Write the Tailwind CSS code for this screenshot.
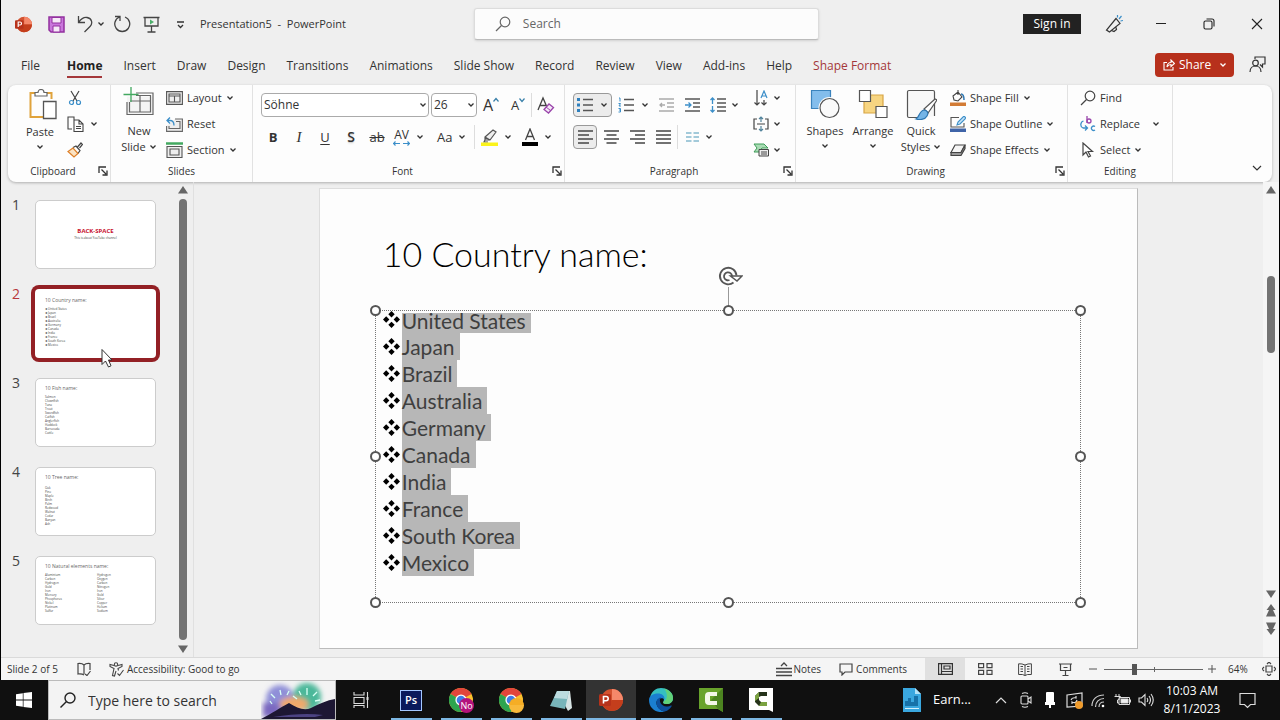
<!DOCTYPE html>
<html lang="en">
<head>
<meta charset="utf-8">
<meta name="viewport" content="width=device-width, initial-scale=1">
<title>Presentation5 - PowerPoint</title>
<script src="https://cdn.jsdelivr.net/npm/@tailwindcss/browser@4"></script>
</head>
<body class="h-screen overflow-hidden bg-[#efefef] font-['Open_Sans',sans-serif] text-[#333]">
<svg class="hidden" aria-hidden="true">
  <symbol id="chev" viewBox="0 0 8 8"><path d="M1.500 2.500 4 5l2.500-2.500" fill="none" stroke="#333" stroke-width="1.300"/></symbol>
  <symbol id="launch" viewBox="0 0 10 10"><path d="M1 7V1h7M3.500 3.500 8 8M9 4.500V9H4.500" fill="none" stroke="#333" stroke-width="1.300"/></symbol>
  <symbol id="ppt" viewBox="0 0 24 24"><circle cx="13" cy="12" r="11" fill="#d35230"/><path d="M13 1a11 11 0 0 1 11 11H13z" fill="#f5886a"/><path d="M13 12h11a11 11 0 0 1-20 6z" fill="#c43e1c"/><rect x="0" y="6" width="12" height="12" rx="1.500" fill="#b7321a"/><path d="M4.500 15.500V8.500h2.600a2 2 0 0 1 0 4.200H4.500" fill="none" stroke="#fff" stroke-width="1.600"/></symbol>
  <symbol id="chrome" viewBox="0 0 24 24"><circle cx="12" cy="12" r="12" fill="#fbc12d"/><path d="M12 12 1.600 6A12 12 0 0 1 22.400 6z" fill="#e2453b"/><path d="M12 12 1.600 6A12 12 0 0 0 12 24l5-9z" fill="#2da44f"/><circle cx="12" cy="12" r="5.600" fill="#fff"/><circle cx="12" cy="12" r="4.300" fill="#3f7de8"/></symbol>
</svg>

<div class="flex h-full flex-col">
<div class="flex min-h-0 flex-1 flex-col border-x border-black">

  <!-- Title bar -->
  <header class="grid h-12 shrink-0 grid-cols-[37%_27%_1fr] items-center">
    <div class="flex items-center pl-[14px]">
      <svg class="size-[17px]"><use href="#ppt"/></svg>
      <button class="ml-4" aria-label="Save"><svg class="size-[17px]" viewBox="0 0 17 17"><path d="M1 1h15v15H3l-2-2z" fill="#c977dc" stroke="#93319f" stroke-width="1.500"/><path d="M4 1.500h9V7H4zM5 10h7v6H5z" fill="#f6e9f8" stroke="#93319f"/></svg></button>
      <button class="ml-3 flex items-center gap-1" aria-label="Undo"><svg class="h-[18px] w-4" viewBox="0 0 16 18" fill="none" stroke="#444" stroke-width="1.300"><path d="M1.500 1v6.500H8M1.800 7.200C4 4 7 2 10 2.500c5 .8 6 6 3 9L7.500 17"/></svg><svg class="size-2"><use href="#chev"/></svg></button>
      <button class="ml-2" aria-label="Repeat"><svg class="size-[18px]" viewBox="0 0 18 18" fill="none" stroke="#444" stroke-width="1.300"><path d="M2 1.500h5V6M6.500 2A7.500 7.500 0 1 0 12 2"/></svg></button>
      <button class="ml-3" aria-label="Start slide show"><svg class="size-[17px]" viewBox="0 0 17 17" fill="none" stroke="#444" stroke-width="1.300"><path d="M.500 1.500h16M2 2v8h13V2M8.500 10v6M4.500 16h8"/><path d="m7 3.500 4 2.500-4 2.500z" fill="#4caf6a" stroke="none"/></svg></button>
      <button class="ml-4" aria-label="Customize toolbar"><svg class="size-[9px]" viewBox="0 0 9 9" fill="none" stroke="#333" stroke-width="1.300"><path d="M1 2h7M2 5l2.500 2.500L7 5"/></svg></button>
      <h1 class="ml-[15px] whitespace-pre text-[11px]">Presentation5  -  PowerPoint</h1>
    </div>
    <label class="flex h-8 items-center gap-3 rounded-[3px] border border-[#dcdcdc] border-b-[#bbb] bg-[#fcfcfc] px-5 shadow-sm">
      <svg class="size-4 shrink-0" viewBox="0 0 16 16" fill="none" stroke="#666" stroke-width="1.200"><circle cx="10" cy="6" r="4.800"/><path d="M6.500 9.500 1 15"/></svg>
      <input type="search" placeholder="Search" aria-label="Search" class="w-full bg-transparent text-[12px] outline-none placeholder:text-[#666]">
    </label>
    <div class="flex items-center justify-end">
      <button class="h-5 w-[58px] bg-[#222] text-[12px] leading-5 text-white">Sign in</button>
      <button class="ml-6 w-[18px]" aria-label="What's new"><svg class="size-[18px]" viewBox="0 0 18 18" fill="none" stroke="#333" stroke-width="1.200"><path d="M11 3.500 1.500 15l3 2L15 8.500zM6.500 15.500l2.500 1 2.500-2-.5-2"/><path d="M12.500 2.500V0M14 4l2.500-3M15.500 6 18 5.500" stroke="#3c8fc9"/></svg></button>
      <button class="ml-8 w-3" aria-label="Minimize"><svg class="h-3 w-3" viewBox="0 0 12 12"><path d="M1 5.500h10" stroke="#222"/></svg></button>
      <button class="ml-9 w-3" aria-label="Restore"><svg class="size-3" viewBox="0 0 12 12" fill="none" stroke="#222" stroke-width="1.100"><rect x="1" y="3" width="8" height="8" rx="1.500"/><path d="M3.500 1H9q2 0 2 2v5.500"/></svg></button>
      <button class="ml-9 mr-4 w-3" aria-label="Close"><svg class="size-3" viewBox="0 0 12 12"><path d="m1 1 10 10M11 1 1 11" stroke="#222" stroke-width="1.100"/></svg></button>
    </div>
  </header>

  <!-- Ribbon tabs -->
  <nav class="flex h-[37px] shrink-0 items-start pl-5 text-[12px] leading-9">
    <div class="flex flex-1 gap-[21px] whitespace-nowrap">
      <a href="#" class="mr-[6px]">File</a>
      <a href="#" class="h-[30px] border-b-2 border-[#a4373a] font-bold text-[#222]">Home</a>
      <a href="#">Insert</a><a href="#">Draw</a><a href="#">Design</a><a href="#">Transitions</a><a href="#">Animations</a><a href="#">Slide Show</a><a href="#">Record</a><a href="#">Review</a><a href="#">View</a><a href="#">Add-ins</a><a href="#">Help</a><a href="#" class="text-[#a4373a]">Shape Format</a>
    </div>
    <button class="mt-[5px] flex h-6 w-[79px] items-center rounded bg-[#b7301c] pl-2 text-[12px] text-white"><svg class="mr-1 size-3" viewBox="0 0 12 12" fill="none" stroke="#fff" stroke-width="1.100"><path d="M4 3.500H1V11h9V8M4 8c0-3 2-4.500 4-4.500V1l3.500 3.500L8 7.500V5.500C6.500 5.500 5 6 4 8z"/></svg>Share<svg class="ml-2 size-2" viewBox="0 0 8 8"><path d="M1.500 2.500 4 5l2.500-2.500" fill="none" stroke="#fff" stroke-width="1.300"/></svg></button>
    <button class="ml-[15px] mr-[13px] mt-[8px]" aria-label="Comments pane"><svg class="size-[17px]" viewBox="0 0 17 17" fill="none" stroke="#333" stroke-width="1.200"><path d="M6 3V1h10v7h-2.500v3L11 8.500"/><circle cx="6.500" cy="7" r="2.800"/><path d="M1 16c0-8 11-8 11 0"/></svg></button>
  </nav>

  <!-- Ribbon -->
  <section class="mx-[7px] flex h-[97px] shrink-0 rounded-lg bg-[#fdfdfd] text-[11px] leading-4 shadow-[0_1px_3px_#0004] *:shrink-0">
    <div class="flex w-[103px] flex-col border-r border-[#e2e2e2]">
      <div class="flex h-[78px]">
        <button class="ml-2 flex w-12 flex-col items-center pt-1"><svg class="ml-[5px] h-[31px] w-7" viewBox="0 0 28 31" fill="none"><path d="M6 4H1.500v24H14M18 4h4.500v6" stroke="#e0a33c" stroke-width="2"/><path d="M6 7V3.500h3a3 3 0 0 1 6 0h3V7z" fill="#fff" stroke="#666" stroke-width="1.200"/><path d="M14.500 12.500h12.500v17H14.500z" fill="#fff" stroke="#555" stroke-width="1.300"/></svg><span class="mt-1">Paste</span><svg class="mt-[3px] size-2"><use href="#chev"/></svg></button>
        <div class="grid grid-rows-3 pl-[3px] *:flex *:items-center">
          <button aria-label="Cut"><svg class="size-4" viewBox="0 0 16 16" fill="none"><path d="m4 1 6 10M12 1 6 11" stroke="#444" stroke-width="1.200"/><circle cx="4.500" cy="12.500" r="2" stroke="#3c8fc9" stroke-width="1.200"/><circle cx="11.500" cy="12.500" r="2" stroke="#3c8fc9" stroke-width="1.200"/></svg></button>
          <button aria-label="Copy" class="gap-[6px]"><svg class="h-4 w-[17px]" viewBox="0 0 17 16" fill="none" stroke="#444" stroke-width="1.100"><path d="M5 13H1V1h6v3M7 4h5l4 4v7.500H7zM12 4v4h4M9 10.500h5M9 12.500h5"/></svg><svg class="size-2"><use href="#chev"/></svg></button>
          <button aria-label="Format painter"><svg class="size-4" viewBox="0 0 16 16" fill="none" stroke="#444" stroke-width="1.200"><path d="M6 5.500 9 4l4 4.500-2 3M10.500 5 14 1l1.500 1.500L12.500 6"/><path d="M6 6 1 9.500 7 15l4-3.500z" fill="#fbe3c3" stroke="#dd7f27"/></svg></button>
        </div>
      </div>
      <div class="flex items-center text-[10px]"><span class="flex-1 text-center">Clipboard</span><button class="mr-[2px]" aria-label="Clipboard options"><svg class="size-[10px]"><use href="#launch"/></svg></button></div>
    </div>

    <div class="flex w-[142px] flex-col border-r border-[#e2e2e2]">
      <div class="flex h-[78px]">
        <button class="ml-1 flex w-12 flex-col items-center pt-[2px]"><svg class="h-[31px] w-8" viewBox="0 0 32 31" fill="none"><path d="M4 9.500h26v18H4z" fill="#f4f4f4"/><path d="M13 6h17v21.500H4V15M6.500 15v10h21V8.500H13M17 9v16M7 14h20" stroke="#666" stroke-width="1.200"/><path d="M8 0v15M.500 7.500h15" stroke="#43a860" stroke-width="1.300"/></svg><span class="mt-[5px]">New</span><span class="flex items-center gap-[3px]">Slide<svg class="size-2"><use href="#chev"/></svg></span></button>
        <div class="grid grid-rows-3 pl-[3px] *:flex *:items-center *:gap-1">
          <button><svg class="h-[14px] w-[17px]" viewBox="0 0 17 14" fill="none" stroke="#555" stroke-width="1.100"><path d="M.6.6h15.800v12.800H.6z" fill="#eee"/><path d="M3 3h11v8H3zM3 5h11M8.500 5v6"/></svg>Layout<svg class="size-2"><use href="#chev"/></svg></button>
          <button><svg class="h-[15px] w-[17px]" viewBox="0 0 17 15" fill="none" stroke="#666" stroke-width="1.100"><path d="M9 2h7.400v12.400H.6V9" fill="#eee"/><path d="M10 4.500h4v7H3V9"/><path d="M4 .5 1 3.500l3 3M1 3.500h3c3 0 4 2 4 5" stroke="#3c8fc9" stroke-width="1.300"/></svg>Reset</button>
          <button><svg class="h-4 w-[17px]" viewBox="0 0 17 16" fill="none" stroke="#555" stroke-width="1.100"><path d="M0 1.500h17" stroke="#43a860" stroke-width="2.500"/><path d="M1 4.500h15v11H1z" fill="#eee"/><path d="M4 7h9v6H4z"/></svg>Section<svg class="size-2"><use href="#chev"/></svg></button>
        </div>
      </div>
      <div class="text-center text-[10px]">Slides</div>
    </div>

    <div class="flex w-[312px] flex-col border-r border-[#e2e2e2]">
      <div class="h-[78px] pt-2 pl-2">
        <div class="flex h-6 items-center">
          <div class="relative mr-[2px] w-[168px]"><select aria-label="Font" class="h-6 w-full appearance-none rounded border border-[#aaa] bg-white pl-[2px] text-[12px] leading-5"><option>Söhne</option></select><svg class="pointer-events-none absolute right-[2px] top-2 size-2"><use href="#chev"/></svg></div>
          <div class="relative w-[46px]"><select aria-label="Font size" class="h-6 w-full appearance-none rounded border border-[#aaa] bg-white pl-[2px] text-[12px] leading-5"><option>26</option></select><svg class="pointer-events-none absolute right-[2px] top-2 size-2"><use href="#chev"/></svg></div>
          <button class="ml-[6px] flex w-[18px] text-[16px]" aria-label="Increase font size">A<svg class="size-[6px]" viewBox="0 0 6 6"><path d="m.5 4.500 2.500-3 2.500 3" fill="none" stroke="#377fa9" stroke-width="1.200"/></svg></button>
          <button class="ml-[10px] flex w-4 text-[13px]" aria-label="Decrease font size">A<svg class="size-[6px]" viewBox="0 0 6 6"><path d="m.5 1.500 2.500 3 2.500-3" fill="none" stroke="#377fa9" stroke-width="1.200"/></svg></button>
          <span class="ml-1 h-6 w-px bg-[#ddd]"></span>
          <button class="ml-[5px]" aria-label="Clear formatting"><svg class="h-[18px] w-[18px]" viewBox="0 0 18 18" fill="none"><path d="M1 14 6 2l3.500 8M3 9.500h6" stroke="#444" stroke-width="1.300"/><path d="m7 13.500 5-5.500 4.500 3.500-5 5.500z" fill="#f5e8f8" stroke="#9a45ab" stroke-width="1.300"/><path d="m9 11 4.500 3.500" stroke="#9a45ab"/></svg></button>
        </div>
        <div class="mt-2 flex h-6 items-center text-[13px]">
          <button class="w-6 font-bold" aria-label="Bold">B</button>
          <button class="ml-[2px] w-6 font-['Liberation_Serif',serif] text-[15px] italic" aria-label="Italic">I</button>
          <button class="ml-[2px] w-6 underline underline-offset-2" aria-label="Underline">U</button>
          <button class="ml-[2px] w-6 text-[14px] font-semibold text-shadow-sm" aria-label="Shadow">S</button>
          <button class="ml-[2px] w-6 line-through" aria-label="Strikethrough">ab</button>
          <button class="ml-1 flex items-center gap-[6px]" aria-label="Character spacing"><span class="flex flex-col items-center text-[12px] leading-3">AV<svg class="h-[5px] w-[17px]" viewBox="0 0 17 5"><path d="M0 2.500h7M10 2.500h7M2.500.5l-2 2 2 2M14.500.5l2 2-2 2" fill="none" stroke="#3c8fc9" stroke-width="1.200"/></svg></span><svg class="size-2"><use href="#chev"/></svg></button>
          <button class="ml-[13px] flex items-center gap-[6px]" aria-label="Change case">Aa<svg class="size-2"><use href="#chev"/></svg></button>
          <span class="ml-2 h-6 w-px bg-[#ddd]"></span>
          <button class="ml-[6px] flex items-center gap-[6px]" aria-label="Highlight"><svg class="h-[18px] w-[17px]" viewBox="0 0 17 18" fill="none"><path d="M4 9 12 2l3 2-6 8H4zM4 9l5 3M4 12l-1 2h4" fill="#eee" stroke="#555" stroke-width="1.200"/><path d="M0 14.500h17V18H0z" fill="#fbf31b"/></svg><svg class="size-2"><use href="#chev"/></svg></button>
          <button class="ml-[10px] flex items-center gap-[6px]" aria-label="Font colour"><svg class="h-[18px] w-4" viewBox="0 0 16 18" fill="none"><path d="M3.500 12 8 1l4.500 11M5 8.500h6" stroke="#444" stroke-width="1.300"/><path d="M0 14h16v4H0z" fill="#000"/></svg><svg class="size-2"><use href="#chev"/></svg></button>
        </div>
      </div>
      <div class="flex items-center text-[10px]"><span class="flex-1 text-center">Font</span><button class="mr-[2px]" aria-label="Font options"><svg class="size-[10px]"><use href="#launch"/></svg></button></div>
    </div>

    <div class="flex w-[231px] flex-col border-r border-[#e2e2e2]">
      <div class="flex h-[78px] pl-2">
        <div class="w-[178px] pt-2">
          <div class="flex h-6 items-center">
            <button class="flex h-6 w-[39px] items-center gap-[7px] rounded border border-[#999] bg-[#ececec] pl-[3px]" aria-label="Bullets"><svg class="size-4" viewBox="0 0 16 16"><path d="M6 2.500h10M6 8h10M6 13.500h10" stroke="#555" stroke-width="1.300"/><path d="M0 1h3v3H0zM0 6.500h3v3H0zM0 12h3v3H0z" fill="#2f80bd"/></svg><svg class="size-2"><use href="#chev"/></svg></button>
            <button class="ml-[6px] flex items-center gap-[7px]" aria-label="Numbering"><svg class="size-4" viewBox="0 0 16 16" fill="none"><path d="M6 2.500h10M6 8h10M6 13.500h10" stroke="#555" stroke-width="1.300"/><path d="M1 1h1v3.500M.5 6.500h2L1 9h2M.5 11.500h2V15h-2M1 13h1.500" stroke="#3c8fc9"/></svg><svg class="size-2"><use href="#chev"/></svg></button>
            <button class="ml-[10px]" aria-label="Decrease indent"><svg class="h-4 w-[15px]" viewBox="0 0 15 16" fill="none" stroke="#aaa" stroke-width="1.300"><path d="M0 2h15M8 6h7M8 10h7M0 14h15M1 8h5M3 6 1 8l2 2"/></svg></button>
            <button class="ml-[11px]" aria-label="Increase indent"><svg class="h-4 w-[15px]" viewBox="0 0 15 16" fill="none" stroke="#555" stroke-width="1.300"><path d="M0 2h15M8 6h7M8 10h7M0 14h15"/><path d="M0 8h6M3.500 5.500 6 8l-2.500 2.500" stroke="#3c8fc9"/></svg></button>
            <button class="ml-[10px] flex items-center gap-[5px]" aria-label="Line spacing"><svg class="size-4" viewBox="0 0 16 16" fill="none" stroke="#555" stroke-width="1.300"><path d="M7 2h9M7 6h9M7 10h9M7 14h9"/><path d="M2.500 1v6M2.500 9v6M.5 3l2-2 2 2M.5 13l2 2 2-2" stroke="#3c8fc9"/></svg><svg class="size-2"><use href="#chev"/></svg></button>
          </div>
          <div class="mt-2 flex h-6 items-center">
            <button class="flex h-6 w-6 items-center justify-center rounded border border-[#999] bg-[#ececec]" aria-label="Align left"><svg class="h-4 w-[15px]" viewBox="0 0 15 16" stroke="#444" stroke-width="1.300"><path d="M0 2h15M0 6h11M0 10h15M0 14h11"/></svg></button>
            <button class="ml-[7px]" aria-label="Align center"><svg class="h-4 w-[15px]" viewBox="0 0 15 16" stroke="#444" stroke-width="1.300"><path d="M0 2h15M2.500 6h10M0 10h15M2.500 14h10"/></svg></button>
            <button class="ml-[11px]" aria-label="Align right"><svg class="h-4 w-[15px]" viewBox="0 0 15 16" stroke="#444" stroke-width="1.300"><path d="M0 2h15M5 6h10M0 10h15M5 14h10"/></svg></button>
            <button class="ml-[11px]" aria-label="Justify"><svg class="h-4 w-[15px]" viewBox="0 0 15 16" stroke="#444" stroke-width="1.300"><path d="M0 2h15M0 6h15M0 10h15M0 14h15"/></svg></button>
            <span class="ml-[6px] h-6 w-px bg-[#ddd]"></span>
            <button class="ml-2 flex items-center gap-[6px]" aria-label="Columns"><svg class="h-[10px] w-[13px]" viewBox="0 0 13 10"><path d="M0 1h5.500M0 5h5.500M0 9h5.500M7.500 1H13M7.500 5H13M7.500 9H13" stroke="#4a97b8" stroke-width="1.200"/></svg><svg class="size-2"><use href="#chev"/></svg></button>
          </div>
        </div>
        <div class="grid grid-rows-3 pl-[2px] *:flex *:items-center *:gap-1">
          <button aria-label="Text direction"><svg class="size-4" viewBox="0 0 16 16" fill="none" stroke="#444" stroke-width="1.200"><path d="M4 0v15M1.500 12.500 4 15l2.500-2.500M11 10v5M8.500 12.500 11 15l2.500-2.500"/><path d="M8 8l3-7 3 7M9 6h4" stroke="#3c8fc9"/></svg><svg class="size-2"><use href="#chev"/></svg></button>
          <button aria-label="Align text"><svg class="size-4" viewBox="0 0 16 16" fill="none" stroke="#444" stroke-width="1.200"><path d="M4 3H1v10h3M12 3h3v10h-3M4 8h8"/><path d="M8 1v5M8 10v5M6 3l2-2 2 2M6 13l2 2 2-2" stroke="#52849c"/></svg><svg class="size-2"><use href="#chev"/></svg></button>
          <button aria-label="Convert to SmartArt"><svg class="size-4" viewBox="0 0 16 16" fill="none"><path d="M1 2h10l4 4H9l-3 4H1l3-4z" fill="#a9dcb4" stroke="#3f9c59"/><path d="M6 7.500h9.500v6.500H6z" fill="#eee" stroke="#444"/><path d="M8 10h6M8 12h6" stroke="#444"/></svg><svg class="size-2"><use href="#chev"/></svg></button>
        </div>
      </div>
      <div class="flex items-center text-[10px]"><span class="flex-1 text-center">Paragraph</span><button class="mr-[2px]" aria-label="Paragraph options"><svg class="size-[10px]"><use href="#launch"/></svg></button></div>
    </div>

    <div class="flex w-[272px] flex-col border-r border-[#e2e2e2]">
      <div class="flex h-[78px] pl-[5px]">
        <button class="flex w-12 flex-col items-center pt-1"><svg class="size-[30px]" viewBox="0 0 30 30"><path d="M1.500 1.500h19v18h-19z" fill="#83bdec" stroke="#3b83bd" stroke-width="1.200"/><circle cx="19.500" cy="19" r="11" fill="#fff"/><circle cx="19.500" cy="19" r="9.500" fill="#fafafa" stroke="#555" stroke-width="1.200"/></svg><span class="mt-1">Shapes</span><svg class="mt-[3px] size-2"><use href="#chev"/></svg></button>
        <button class="flex w-12 flex-col items-center pt-1"><svg class="size-[30px]" viewBox="0 0 30 30" stroke="#555" stroke-width="1.200"><path d="M6 6h19v18H6z" fill="#f7d581" stroke="#d8a545"/><path d="M1.500 1.500h11v11h-11zM18 17.500h11v11H18z" fill="#fff"/></svg><span class="mt-1">Arrange</span><svg class="mt-[3px] size-2"><use href="#chev"/></svg></button>
        <button class="flex w-12 flex-col items-center pt-1"><svg class="size-[31px]" viewBox="0 0 31 31"><path d="M20 28.500H3a1.500 1.500 0 0 1-1.500-1.500V3A1.500 1.500 0 0 1 3 1.500h24A1.500 1.500 0 0 1 28.500 3v24" fill="#f8f8f8" stroke="#555" stroke-width="1.200"/><path d="M31 11 22 24l-4-4L29 10z" fill="#fff" stroke="#555" stroke-width="1.200"/><path d="M18 21c3 0 5 3 3 6-2 4-8 4-11 3 3-1 3-8 8-9z" fill="#74b4e6" stroke="#2d76b1" stroke-width="1.200"/></svg><span class="mt-[3px]">Quick</span><span class="flex items-center gap-[3px]">Styles<svg class="size-2"><use href="#chev"/></svg></span></button>
        <div class="grid grid-rows-3 pl-[5px] *:flex *:items-center *:gap-1">
          <button><svg class="size-4" viewBox="0 0 16 16" fill="none" stroke="#444" stroke-width="1.100"><path d="m3 6 5-4 4 5-4 4-4-1zM8 5V0"/><path d="M11 4c3 0 3 3 3 6" stroke="#2d76b1" stroke-width="1.500"/><path d="M0 12.500h16V16H0z" fill="#d27b35" stroke="none"/></svg>Shape Fill<svg class="size-2"><use href="#chev"/></svg></button>
          <button><svg class="size-4" viewBox="0 0 16 16" fill="none" stroke="#555" stroke-width="1.100"><path d="M9 1.500H1V11h13V7"/><path d="m7 9 1-3 6-6 2 2-6 6z" fill="#c7e3f7" stroke="#3c8fc9"/><path d="M0 12.500h16V16H0z" fill="#3f64a8" stroke="none"/></svg>Shape Outline<svg class="size-2"><use href="#chev"/></svg></button>
          <button><svg class="size-4" viewBox="0 0 16 16" stroke="#444" stroke-width="1.200"><path d="M1 10.500 5 3h10l-4 7.500z" fill="#f5f5f5"/><path d="M1 10.500v3h10l4-7V3l-4 7.500z" fill="#999"/></svg>Shape Effects<svg class="size-2"><use href="#chev"/></svg></button>
        </div>
      </div>
      <div class="flex items-center text-[10px]"><span class="flex-1 text-center">Drawing</span><button class="mr-[2px]" aria-label="Drawing options"><svg class="size-[10px]"><use href="#launch"/></svg></button></div>
    </div>

    <div class="flex w-[105px] flex-col border-r border-[#e2e2e2]">
      <div class="grid h-[78px] grid-rows-3 pl-3 pr-3 *:flex *:items-center *:gap-1">
        <button><svg class="size-4" viewBox="0 0 16 16" fill="none" stroke="#444" stroke-width="1.200"><circle cx="10" cy="6" r="4.800"/><path d="M6.500 9.500 1 15"/></svg>Find</button>
        <button><svg class="size-4" viewBox="0 0 16 16" fill="none" stroke-width="1.300"><path d="M7 0v7" stroke="#9a45ab"/><circle cx="9" cy="5" r="2" stroke="#9a45ab"/><path d="M15 10.500a2.200 2.200 0 1 0 0 3.500M3.500 5C0 6 0 11 3 12h4M5 9.500 7.500 12 5 14.500" stroke="#3c8fc9"/></svg>Replace<svg class="ml-auto size-2"><use href="#chev"/></svg></button>
        <button><svg class="size-4" viewBox="0 0 16 16"><path d="M3 1v12l3-3 2.500 5 2-1L8 9.500h4.500z" fill="#fff" stroke="#444" stroke-width="1.200"/></svg>Select<svg class="size-2"><use href="#chev"/></svg></button>
      </div>
      <div class="text-center text-[10px]">Editing</div>
    </div>
    <div class="flex flex-1 items-end justify-end pb-2 pr-[9px]"><button aria-label="Collapse ribbon"><svg class="size-3" viewBox="0 0 12 12"><path d="m2 4 4 4 4-4" fill="none" stroke="#333" stroke-width="1.200"/></svg></button></div>
  </section>

  <!-- Workspace -->
  <main class="flex min-h-0 flex-1">
    <aside class="flex w-[193px] border-r border-[#e0e0e0]">
      <ol class="flex flex-1 flex-col gap-5 pt-[18px] pl-[11px] text-[14px] text-[#444]">
        <li class="flex gap-[14px]"><span class="-mt-[6px] w-[9px]">1</span>
          <div class="h-[69px] w-[121px] rounded-[5px] border border-[#ccc] bg-white pt-[26px] text-center"><p class="text-[6px] leading-[8px] font-bold text-[#c8102e]">BACK-SPACE</p><p class="text-[3px] leading-[6px]">This is about YouTube channel</p></div></li>
        <li class="flex gap-[14px]"><span class="-mt-[6px] w-[9px] text-[#b7373a]">2</span>
          <div class="relative h-[69px] w-[121px] rounded-[4px] bg-white pt-[7px] pl-[10px] ring-4 ring-[#932025]"><p class="text-[5px] leading-[8px] text-[#666]">10 Country name:</p><p class="mt-[3px] text-[3px] leading-[4px]">❖United States<br>❖Japan<br>❖Brazil<br>❖Australia<br>❖Germany<br>❖Canada<br>❖India<br>❖France<br>❖South Korea<br>❖Mexico</p>
            <svg class="absolute left-[66px] top-[59px] h-[21px] w-3" viewBox="0 0 12 21"><path d="M1 1.500v15l3.500-3.500 3 6 2.500-1.200L7.500 12H11z" fill="#fff" stroke="#333"/></svg></div></li>
        <li class="flex gap-[14px]"><span class="-mt-[6px] w-[9px]">3</span>
          <div class="h-[69px] w-[121px] rounded-[5px] border border-[#ccc] bg-white pt-[5px] pl-[9px]"><p class="text-[5px] leading-[8px] text-[#666]">10 Fish name:</p><p class="mt-[3px] text-[3px] leading-[4px]">Salmon<br>Clownfish<br>Tuna<br>Trout<br>Swordfish<br>Catfish<br>Anglerfish<br>Haddock<br>Barracuda<br>Cuttle</p></div></li>
        <li class="flex gap-[14px]"><span class="-mt-[6px] w-[9px]">4</span>
          <div class="h-[69px] w-[121px] rounded-[5px] border border-[#ccc] bg-white pt-[5px] pl-[9px]"><p class="text-[5px] leading-[8px] text-[#666]">10 Tree name:</p><p class="mt-[5px] text-[3px] leading-[4px]">Oak<br>Pine<br>Maple<br>Birch<br>Palm<br>Redwood<br>Walnut<br>Cedar<br>Banyan<br>Ash</p></div></li>
        <li class="flex gap-[14px]"><span class="-mt-[6px] w-[9px]">5</span>
          <div class="h-[69px] w-[121px] rounded-[5px] border border-[#ccc] bg-white pt-[5px] pl-[9px]"><p class="text-[5px] leading-[8px] text-[#666]">10 Natural elements name:</p><div class="mt-[3px] grid grid-cols-[52px_1fr] text-[3px] leading-[4px]"><p>Aluminium<br>Carbon<br>Hydrogen<br>Gold<br>Iron<br>Mercury<br>Phosphorus<br>Nickel<br>Platinum<br>Sulfur</p><p>Hydrogen<br>Oxygen<br>Carbon<br>Nitrogen<br>Iron<br>Gold<br>Silver<br>Copper<br>Helium<br>Sodium</p></div></div></li>
      </ol>
      <div class="mr-[5px] flex w-[10px] flex-col items-center gap-[5px] py-1">
        <svg class="h-2 w-[10px]" viewBox="0 0 10 8"><path d="m5 0 5 7.500H0z" fill="#666"/></svg><span class="w-2 flex-1 rounded bg-[#737373]"></span><svg class="h-2 w-[10px]" viewBox="0 0 10 8"><path d="m5 8 5-7.500H0z" fill="#666"/></svg>
      </div>
    </aside>

    <div class="flex min-w-0 flex-1 justify-center pt-[6px] pb-2">
      <article class="flex aspect-video h-full flex-col border border-[#ddd] border-r-[#bbb] border-b-[#bbb] bg-[#fdfdfd]">
        <h2 class="ml-[63px] mt-[41px] font-['Lato',sans-serif] text-[34px] leading-12 font-light text-black">10 Country name:</h2>
        <div class="relative mt-8 mr-14 ml-[55px] h-[293px] border border-dotted border-[#777] pl-[7px]">
          <ul class="font-['Lato',sans-serif] text-[21px] leading-[27px] text-[#3f3f3f] *:flex *:items-center">
            <li class="h-[22px] items-start!"><svg class="mr-[2px] size-[17px]" viewBox="0 0 16 16"><path id="dm" d="m8 0 3 3-3 3-3-3zM8 10l3 3-3 3-3-3zM3 5l3 3-3 3-3-3zM13 5l3 3-3 3-3-3z" fill="#000"/></svg><span class="mt-[2px] h-5 bg-[#b7b7b7] pr-[5px] leading-4">United States</span></li>
            <li><svg class="mr-[2px] size-[17px]" viewBox="0 0 16 16"><use href="#dm"/></svg><span class="bg-[#b7b7b7] pr-[5px]">Japan</span></li>
            <li><svg class="mr-[2px] size-[17px]" viewBox="0 0 16 16"><use href="#dm"/></svg><span class="bg-[#b7b7b7] pr-[5px]">Brazil</span></li>
            <li><svg class="mr-[2px] size-[17px]" viewBox="0 0 16 16"><use href="#dm"/></svg><span class="bg-[#b7b7b7] pr-[5px]">Australia</span></li>
            <li><svg class="mr-[2px] size-[17px]" viewBox="0 0 16 16"><use href="#dm"/></svg><span class="bg-[#b7b7b7] pr-[5px]">Germany</span></li>
            <li><svg class="mr-[2px] size-[17px]" viewBox="0 0 16 16"><use href="#dm"/></svg><span class="bg-[#b7b7b7] pr-[5px]">Canada</span></li>
            <li><svg class="mr-[2px] size-[17px]" viewBox="0 0 16 16"><use href="#dm"/></svg><span class="bg-[#b7b7b7] pr-[5px]">India</span></li>
            <li><svg class="mr-[2px] size-[17px]" viewBox="0 0 16 16"><use href="#dm"/></svg><span class="bg-[#b7b7b7] pr-[5px]">France</span></li>
            <li><svg class="mr-[2px] size-[17px]" viewBox="0 0 16 16"><use href="#dm"/></svg><span class="bg-[#b7b7b7] pr-[5px]">South Korea</span></li>
            <li><svg class="mr-[2px] size-[17px]" viewBox="0 0 16 16"><use href="#dm"/></svg><span class="bg-[#b7b7b7] pr-[5px]">Mexico</span></li>
          </ul>
          <span class="absolute -top-6 left-1/2 h-6 w-px bg-[#999]"></span>
          <svg class="absolute -top-[46px] left-1/2 -ml-[11px] h-[22px] w-[26px]" viewBox="0 0 26 22"><path d="M19.500 10.500a8.300 8.300 0 1 0-3 7M15 11a4 4 0 1 0-2.500 4" fill="none" stroke="#555" stroke-width="1.800"/><path d="M13.500 11h11.500l-5 5z" fill="#fff" stroke="#555" stroke-width="1.500"/></svg>
          <i class="absolute -top-[6px] -left-[6px] size-[11px] rounded-full border-2 border-[#555] bg-white"></i>
          <i class="absolute -top-[6px] left-1/2 -ml-[5px] size-[11px] rounded-full border-2 border-[#555] bg-white"></i>
          <i class="absolute -top-[6px] -right-[6px] size-[11px] rounded-full border-2 border-[#555] bg-white"></i>
          <i class="absolute top-1/2 -left-[6px] -mt-[6px] size-[11px] rounded-full border-2 border-[#555] bg-white"></i>
          <i class="absolute top-1/2 -right-[6px] -mt-[6px] size-[11px] rounded-full border-2 border-[#555] bg-white"></i>
          <i class="absolute -bottom-[6px] -left-[6px] size-[11px] rounded-full border-2 border-[#555] bg-white"></i>
          <i class="absolute -bottom-[6px] left-1/2 -ml-[5px] size-[11px] rounded-full border-2 border-[#555] bg-white"></i>
          <i class="absolute -right-[6px] -bottom-[6px] size-[11px] rounded-full border-2 border-[#555] bg-white"></i>
        </div>
      </article>
    </div>

    <div class="flex w-4 flex-col items-center bg-[#f5f5f5] pt-1 pb-[22px]">
      <svg class="h-2 w-[10px]" viewBox="0 0 10 8"><path d="m5 0 5 7.500H0z" fill="#666"/></svg>
      <span class="mt-[82px] h-[77px] w-2 rounded bg-[#737373]"></span>
      <svg class="mt-auto h-2 w-[10px]" viewBox="0 0 10 8"><path d="m5 8 5-7.500H0z" fill="#666"/></svg>
      <svg class="mt-[6px] h-[13px] w-[10px]" viewBox="0 0 10 13"><path d="m5 0 4.500 6H7l3 6.500H0L3 6H.5z" fill="#666"/></svg>
      <svg class="mt-[5px] h-[13px] w-[10px]" viewBox="0 0 10 13"><path d="m5 13 4.500-6H7L10 .5H0L3 7H.5z" fill="#666"/></svg>
    </div>
  </main>

  <!-- Status bar -->
  <footer class="flex h-[23px] shrink-0 items-center border-t border-[#dadada] bg-[#f5f5f5] pl-[6px] text-[10px]">
    <span>Slide 2 of 5</span>
    <button class="ml-[19px]" aria-label="Spelling"><svg class="size-[14px]" viewBox="0 0 14 14" fill="none" stroke="#444" stroke-width="1.200"><path d="M7 3v9M7 3Q5 1 1 1.500V12q4-.5 6 1M7 3q2-2 6-1.500V8M8 12l2 1.500L13.500 9"/></svg></button>
    <button class="ml-[18px] flex items-center gap-[3px]"><svg class="size-[15px]" viewBox="0 0 15 15" fill="none" stroke="#444" stroke-width="1.100"><circle cx="7" cy="2.500" r="1.700"/><path d="M5 3.500 1 2.500v2l4 2-1.500 7 2 .5L7 9M9 3.500l4-1v2L9 6.500l.5 2M8.500 11.500l2 2L14.500 8"/></svg>Accessibility: Good to go</button>
    <button class="ml-auto flex items-center gap-[2px]"><svg class="h-4 w-4" viewBox="0 0 16 16" fill="none" stroke="#444" stroke-width="1.300"><path d="M0 7.500h16M0 11h16M0 14.500h16M5 5l3-3 3 3"/></svg>Notes</button>
    <button class="ml-[18px] flex items-center gap-[3px]"><svg class="h-[13px] w-[14px]" viewBox="0 0 14 13" fill="none" stroke="#444" stroke-width="1.200"><path d="M1 1h12v8H6l-3 3V9H1z"/></svg>Comments</button>
    <button class="ml-[18px] flex h-full w-10 items-center justify-center bg-[#e0e0e0]" aria-label="Normal view"><svg class="h-3 w-[15px]" viewBox="0 0 15 12" fill="none" stroke="#333" stroke-width="1.200"><path d="M.6.6h13.800v10.800H.6zM3.500 1v10M3.500 8.500h11M6 3h6v3H6z"/></svg></button>
    <button class="flex w-10 justify-center" aria-label="Slide sorter"><svg class="h-3 w-[15px]" viewBox="0 0 15 12" fill="none" stroke="#444" stroke-width="1.200"><path d="M.6.6h5v4h-5zM9 .6h5v4H9zM.6 7.400h5v4h-5zM9 7.400h5v4H9z"/></svg></button>
    <button class="flex w-10 justify-center" aria-label="Reading view"><svg class="h-[13px] w-[14px]" viewBox="0 0 14 13" fill="none" stroke="#444"><path d="M7 2v10.500M7 2Q4 .5.6.8v10.700Q5 11 7 12.500q2-1.500 6.400-1V.8Q10 .5 7 2M2.500 3.500H5M2.500 6H5M2.500 8.500H5M9 3.500h2.500M9 6h2.500M9 8.500h2.500"/></svg></button>
    <button class="flex w-10 justify-center" aria-label="Slide show"><svg class="size-[13px]" viewBox="0 0 13 13" fill="none" stroke="#444" stroke-width="1.200"><path d="M0 1h13M1.500 1v6.500h10V1M6.500 7.500v5M3.500 12.500h6M4.500 4.500h4"/></svg></button>
    <button class="ml-1 w-[10px]" aria-label="Zoom out"><svg class="size-2" viewBox="0 0 8 8"><path d="M0 4h8" stroke="#555"/></svg></button>
    <div class="relative ml-[5px] flex w-[99px] items-center">
      <input type="range" aria-label="Zoom" min="0" max="100" value="30" class="h-4 w-full appearance-none bg-transparent [&::-webkit-slider-runnable-track]:h-px [&::-webkit-slider-runnable-track]:bg-[#666] [&::-webkit-slider-thumb]:-mt-[5px] [&::-webkit-slider-thumb]:h-[11px] [&::-webkit-slider-thumb]:w-[5px] [&::-webkit-slider-thumb]:appearance-none [&::-webkit-slider-thumb]:bg-[#555]">
      <span class="absolute left-1/2 h-[5px] w-px bg-[#666]"></span>
    </div>
    <button class="ml-[5px]" aria-label="Zoom in"><svg class="size-2" viewBox="0 0 8 8"><path d="M0 4h8M4 0v8" stroke="#555"/></svg></button>
    <span class="ml-3 w-[22px]">64%</span>
    <button class="ml-3 mr-[3px]" aria-label="Fit slide"><svg class="size-[14px]" viewBox="0 0 14 14" fill="none" stroke="#444" stroke-width="1.200"><path d="M4 4h6v6H4zM5 2l2-2 2 2M5 12l2 2 2-2M2 5 0 7l2 2M12 5l2 2-2 2"/></svg></button>
  </footer>
</div>

<!-- Windows taskbar -->
<footer class="flex h-10 shrink-0 items-center bg-[#101010] text-white">
  <button class="flex w-12 justify-center" aria-label="Start"><svg class="size-4" viewBox="0 0 16 16" fill="#fff"><path d="m0 2.200 6.800-1v6.400H0zM7.500 1.100 16 0v7.600H7.500zM0 8.400h6.800v6.400l-6.800-1zM7.500 8.400H16V16l-8.500-1.100z"/></svg></button>
  <div class="flex h-full w-72 items-center border border-[#bbb] bg-[#f3f3f3] pl-[11px]">
    <svg class="mr-3 size-4 shrink-0" viewBox="0 0 16 16" fill="none" stroke="#222" stroke-width="1.400"><circle cx="10" cy="6" r="5"/><path d="M6.500 9.500.5 15.500"/></svg>
    <input type="text" aria-label="Type here to search" placeholder="Type here to search" class="min-w-0 flex-1 bg-transparent text-[14px] outline-none placeholder:text-[#333]">
    <svg class="h-[38px] w-[74px] shrink-0" viewBox="0 0 74 38">
      <defs><filter id="glow" x="-30%" y="-30%" width="160%" height="160%"><feGaussianBlur stdDeviation="2.500"/></filter></defs>
      <g filter="url(#glow)"><circle cx="19" cy="18" r="14" fill="#8f8fd8"/><circle cx="46" cy="16" r="14" fill="#4bb89a"/><ellipse cx="33" cy="23" rx="14" ry="7" fill="#f0a96a"/><path d="M2 22h16v14H2z" fill="#7a68c0"/></g>
      <path d="M11 23 9 20M14 17l-4-4M20 14l-1-5M26 14l2-4M36 18l-4-3M40 14l-2-4M46 14V7M52 15l4-4M54 20l5-1" stroke="#d8fff4" stroke-width="1.300"/>
      <path d="M0 38C10 33 20 26 28 22c8 5 15 8 22 5 8-4 16-8 24-9v20z" fill="#1d1733"/><path d="M12 36q30-5 50-2l-8 2z" fill="#4c4383"/>
    </svg>
  </div>
  <button class="flex w-[50px] justify-center" aria-label="Task view"><svg class="size-4" viewBox="0 0 16 16" fill="none" stroke="#ddd" stroke-width="1.100"><path d="M1 0v3h10V0M1 5.500h10v6H1zM1 16v-2.500h10V16M14.500 0v16"/><path d="M13.500 5h2v3h-2z" fill="#ddd" stroke="none"/></svg></button>
  <div class="flex h-full *:relative *:flex *:h-full *:w-[50px] *:items-center *:justify-center">
    <button aria-label="Photoshop"><span class="flex h-[21px] w-[22px] items-center justify-center border border-[#a5c8ff] bg-[#0b1a5c] text-[11px] font-semibold">Ps</span><i class="absolute bottom-0 h-[2px] w-[41px] bg-[#7db7e3]"></i></button>
    <button aria-label="Chrome profile No"><svg class="size-6"><use href="#chrome"/></svg><span class="absolute top-[18px] left-[23px] size-[15px] rounded-full bg-[#b4127c] text-center text-[9px] leading-[15px]">No</span><i class="absolute bottom-0 h-[2px] w-[41px] bg-[#7db7e3]"></i></button>
    <button aria-label="Chrome"><svg class="size-6"><use href="#chrome"/></svg><span class="absolute top-[18px] left-[23px] size-[15px] rounded-full bg-linear-to-b from-[#f5ad25] from-50% to-[#f8b93b] to-50%"></span><i class="absolute bottom-0 h-[2px] w-[41px] bg-[#7db7e3]"></i></button>
    <button aria-label="Notepad"><svg class="h-[21px] w-[22px]" viewBox="0 0 22 21"><path d="M7 1h13l2 17-4 3z" fill="#d8e4e4"/><path d="M7 1h12l-4 18L0 16z" fill="#78b5ba"/><path d="M7 1h12l-2 8L4 8z" fill="#bcdcdf"/></svg><i class="absolute bottom-0 h-[2px] w-[41px] bg-[#7db7e3]"></i></button>
    <button class="bg-[#333]" aria-label="PowerPoint"><svg class="size-6"><use href="#ppt"/></svg><i class="absolute bottom-0 h-[2px] w-full bg-[#7db7e3]"></i></button>
    <button aria-label="Edge"><svg class="size-6" viewBox="0 0 24 24"><path d="M1 9C3 3 7 0 12 0c7 0 12 4.500 12 10 0 4-3 6-6.500 6-3 0-4-1-3-2.500C16 10 13.500 7 9.500 7 5.500 7 2.500 8 1 9z" fill="#35bfc0"/><path d="M15 .5c5.500 1.500 9 5 9 9.500 0 4-3 6-6.500 6-3 0-4-1-3-2.500C19 12 19 5 15 .5z" fill="#62d178"/><path d="M0 12c0-4 4-6.500 9-6.500 4 0 7 2.500 6.500 6C14 9.500 8 9.500 7.500 14c-.5 5 4.500 9 8.500 9.500C7 26 0 20 0 12z" fill="#1b7fd0"/><path d="M7.500 14c.3-3 2.500-4.500 4.500-4.500-3 3 .5 9 5.500 9 2 0 3.500-.5 4.500-1 .6-.3 1 .2.600.8C21 21 18 23.500 15.500 23.500 11 23 7 19 7.500 14z" fill="#0d4f9c"/></svg><i class="absolute bottom-0 h-[2px] w-[41px] bg-[#7db7e3]"></i></button>
    <button aria-label="Camtasia"><svg class="size-6" viewBox="0 0 24 24"><path d="M0 0h24v24l-5-3H0z" fill="#68a32b"/><path d="M24 0v24l-5-3-7-9z" fill="#4c8420"/><path d="M18 4H10Q6 4 6 8v5q0 4 4 4h8v-4h-7V8h7z" fill="#f2f7e8"/></svg><i class="absolute bottom-0 h-[2px] w-[41px] bg-[#7db7e3]"></i></button>
    <button aria-label="Camtasia recorder"><svg class="size-6" viewBox="0 0 24 24"><path d="M0 0h24v24l-4-2H0z" fill="#fff"/><path d="M18 4h-8L6 8v6l4 4h8v-4h-6l-2-2V9l2-1h6z" fill="#26331b"/><path d="M10 4 6 8v5l4-3zM10 18l2-4h6v4z" fill="#7aa241"/></svg><i class="absolute bottom-0 h-[2px] w-[41px] bg-[#7db7e3]"></i></button>
  </div>
  <div class="ml-auto flex items-center">
    <button class="flex items-center gap-3 text-[13px]"><svg class="h-6 w-[18px]" viewBox="0 0 18 24"><path d="M0 0h12l6 6v18H0z" fill="#3aa7df"/><path d="M12 0v6h6z" fill="#b4e2f7"/><path d="M2 18v-5h3v-3h3v4h3v-6h4v10z" fill="#1771a8"/><path d="M2 20h14v1H2z" fill="#d3f0fc"/></svg>Earn...</button>
    <button class="ml-6" aria-label="Show hidden icons"><svg class="h-2 w-3" viewBox="0 0 12 8"><path d="m1 7 5-5 5 5" fill="none" stroke="#ddd" stroke-width="1.200"/></svg></button>
    <svg class="ml-[13px] h-4 w-3" viewBox="0 0 12 16" fill="none" stroke="#ddd" stroke-width="1.100"><rect x="1" y="4" width="7" height="8" rx="1"/><path d="m8 7 3-2v6L8 9M2 1.500q3-1.500 6 0M2 14.500q3 1.500 6 0"/></svg>
    <svg class="ml-[13px] h-4 w-[10px]" viewBox="0 0 10 16" fill="#fff"><rect x="1" width="8" height="12" rx="1"/><path d="M0 10h10v3H0zM4 13h2v3H4z"/></svg>
    <svg class="ml-[11px] size-[17px]" viewBox="0 0 17 17" fill="none" stroke="#ddd" stroke-width="1.200"><path d="M1 3 16 1v13L1 15zM5 8q1-3 5-2V4M11 8q-1 4-5 2v2"/><circle cx="13" cy="13" r="4" fill="#ef9b2c" stroke="none"/></svg>
    <svg class="ml-2 size-[15px]" viewBox="0 0 15 15" fill="none" stroke="#ccc" stroke-width="1.200"><path d="M1 13C1 6 6 2 13 2M4.500 14C4.500 9 8 5.500 13 5.500M8 14c0-3 2-5 5-5"/><circle cx="12" cy="13" r="1.300" fill="#fff" stroke="none"/></svg>
    <svg class="ml-2 h-3 w-[17px]" viewBox="0 0 17 12" fill="none" stroke="#ddd"><path d="M5 3.500h10.500v7H5z"/><path d="M7 5h7v4H7z" fill="#eee"/><path d="M2 0v2M5 0v2M.5 2.500h6Q6.500 6 3.500 6v3H5M16.500 5.500v3"/></svg>
    <svg class="ml-[7px] h-[14px] w-4" viewBox="0 0 16 14" fill="none" stroke="#ddd" stroke-width="1.100"><path d="M1 5h2.500L7 1.500v11L3.500 9H1zM9 5q1.500 2 0 4M11 3q3 4 0 8M13 1q4.500 6 0 12"/></svg>
    <time class="ml-[9px] w-[58px] text-center text-[12px] leading-[18px]">10:03 AM<br>8/11/2023</time>
    <button class="ml-[18px] mr-6" aria-label="Notifications"><svg class="size-[17px]" viewBox="0 0 17 17"><path d="M1 1.500h15v11h-4.500l-3 3-3-3H1z" fill="none" stroke="#ddd" stroke-width="1.200"/></svg></button>
  </div>
</footer>
</div>
</body>
</html>
